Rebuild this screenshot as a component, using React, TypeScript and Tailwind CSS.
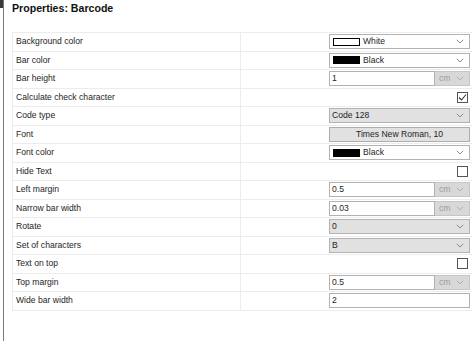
import React from "react";

const Chevron = ({ color = "#8a8a8a" }: { color?: string }) => (
  <svg width="8" height="5" viewBox="0 0 8 5" className="shrink-0">
    <polyline points="0.8,0.8 4,4 7.2,0.8" fill="none" stroke={color} strokeWidth="1" />
  </svg>
);

const Row = ({ label, children }: { label: string; children?: React.ReactNode }) => (
  <div className="flex h-[18.5px] border-b border-[#ececec]">
    <div className="w-[228px] shrink-0 border-r border-[#ececec] pl-[3px] flex items-center">{label}</div>
    <div className="flex-1 flex items-center justify-end pr-[2px]">{children}</div>
  </div>
);

const ColorSelect = ({ color, name }: { color: "white" | "black"; name: string }) => (
  <div className="w-[141px] h-[15px] border border-[#b2b2b2] bg-white flex items-center pl-[3px] pr-[5px]">
    <div className={"w-[27px] h-[8px] border border-black " + (color === "black" ? "bg-black" : "bg-white")} />
    <span className="ml-[3px]">{name}</span>
    <div className="ml-auto flex items-center">
      <Chevron />
    </div>
  </div>
);

const GraySelect = ({ value }: { value: string }) => (
  <div className="w-[141px] h-[15px] border border-[#b2b2b2] bg-[#e1e1e1] flex items-center pl-[2px] pr-[5px]">
    <span>{value}</span>
    <div className="ml-auto flex items-center">
      <Chevron />
    </div>
  </div>
);

const UnitInput = ({ value }: { value: string }) => (
  <div className="w-[141px] h-[15px] flex">
    <div className="flex-1 border border-[#b2b2b2] bg-white flex items-center pl-[2px]">{value}</div>
    <div className="w-[35px] border border-l-0 border-[#c6c6c6] bg-[#d8d8d8] flex items-center pl-[4px] pr-[5px] text-[#9c9c9c]">
      <span>cm</span>
      <div className="ml-auto flex items-center">
        <Chevron color="#b0b0b0" />
      </div>
    </div>
  </div>
);

const PlainInput = ({ value }: { value: string }) => (
  <div className="w-[141px] h-[15px] border border-[#b2b2b2] bg-white flex items-center pl-[2px]">{value}</div>
);

const Checkbox = ({ checked }: { checked?: boolean }) => (
  <div className="w-[11px] h-[11px] border border-[#555] bg-white mr-[2px] flex items-center justify-center">
    {checked && (
      <svg width="9" height="9" viewBox="0 0 9 9">
        <polyline points="1,4.5 3.5,7 8,1.5" fill="none" stroke="#333" strokeWidth="1.1" />
      </svg>
    )}
  </div>
);

export default function App() {
  return (
    <div className="w-[474px] h-[341px] bg-white text-[#1e1e1e] font-['Liberation_Sans',Arial,sans-serif] text-[8.6px] leading-none overflow-hidden">
      <div className="flex h-full">
        <div className="w-[3px] shrink-0 flex flex-col">
          <div className="h-[8px] bg-[#3a3a3a] w-[3px]" />
        </div>
        <div className="flex-1 border-l border-[#7a7a7a] pl-[8px] pr-[2px] flex flex-col">
          <div className="pt-[3px] h-[32px] text-[10.6px] font-bold text-[#111] leading-[11px]">Properties: Barcode</div>
          <div className="border-t border-l border-[#ececec]">
            <Row label="Background color"><ColorSelect color="white" name="White" /></Row>
            <Row label="Bar color"><ColorSelect color="black" name="Black" /></Row>
            <Row label="Bar height"><UnitInput value="1" /></Row>
            <Row label="Calculate check character"><Checkbox checked /></Row>
            <Row label="Code type"><GraySelect value="Code 128" /></Row>
            <Row label="Font">
              <div className="w-[141px] h-[15px] border border-[#adadad] bg-[#e1e1e1] flex items-center justify-center">Times New Roman, 10</div>
            </Row>
            <Row label="Font color"><ColorSelect color="black" name="Black" /></Row>
            <Row label="Hide Text"><Checkbox /></Row>
            <Row label="Left margin"><UnitInput value="0.5" /></Row>
            <Row label="Narrow bar width"><UnitInput value="0.03" /></Row>
            <Row label="Rotate"><GraySelect value="0" /></Row>
            <Row label="Set of characters"><GraySelect value="B" /></Row>
            <Row label="Text on top"><Checkbox /></Row>
            <Row label="Top margin"><UnitInput value="0.5" /></Row>
            <Row label="Wide bar width"><PlainInput value="2" /></Row>
          </div>
        </div>
      </div>
    </div>
  );
}
